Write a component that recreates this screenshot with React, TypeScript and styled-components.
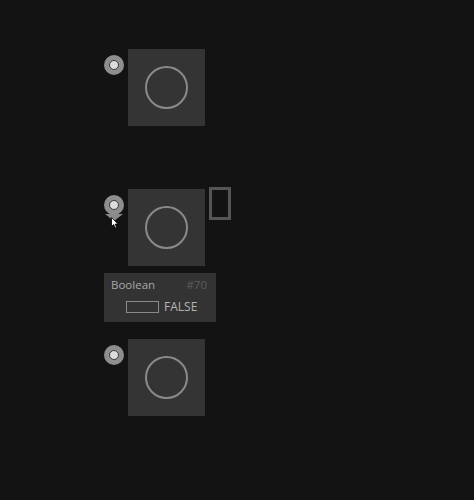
import styled, { createGlobalStyle } from 'styled-components';

const GlobalStyle = createGlobalStyle`
  html, body {
    margin: 0;
    padding: 0;
    background: #131313;
  }
  body {
    font-family: "Open Sans", "Liberation Sans", sans-serif;
  }
`;

// Fondo del lienzo con los nodos
const Canvas = styled.div`
  min-height: 500px;
  box-sizing: border-box;
  padding: 49px 0 0 104px;
  display: flex;
  flex-direction: column;
  align-items: flex-start;
`;

const NodeRow = styled.div<{ $mt?: number }>`
  display: flex;
  align-items: flex-start;
  gap: 4px;
  margin-top: ${(p) => p.$mt ?? 0}px;
`;

const Pin = styled.div`
  position: relative;
  margin-top: 6px;
  width: 20px;
  display: flex;
  flex-direction: column;
  align-items: center;
`;

const PinHead = styled.div`
  width: 20px;
  height: 20px;
  border-radius: 50%;
  background: #8e8e8e;
  display: flex;
  align-items: center;
  justify-content: center;
`;

const PinDot = styled.div`
  width: 8px;
  height: 8px;
  border-radius: 50%;
  background: #dcdcdc;
  border: 1px solid #3a3a3a;
`;

const PinArrow = styled.div`
  width: 0;
  height: 0;
  margin-top: -1px;
  border-left: 9px solid transparent;
  border-right: 9px solid transparent;
  border-top: 7px solid #8a8a8a;
`;

const Cursor = styled.svg`
  position: absolute;
  left: 7px;
  top: 22px;
`;

const NodeBox = styled.div`
  width: 77px;
  height: 77px;
  background: #343434;
  display: flex;
  align-items: center;
  justify-content: center;
`;

const Ring = styled.div`
  width: 39px;
  height: 39px;
  border-radius: 50%;
  border: 2px solid #8a8a8a;
`;

const Outline = styled.div`
  margin-top: -2px;
  width: 16px;
  height: 27px;
  border: 3px solid #565656;
`;

const Tooltip = styled.div`
  margin-top: 7px;
  width: 112px;
  height: 49px;
  box-sizing: border-box;
  padding: 4px 9px 0 7px;
  background: #333333;
  display: flex;
  flex-direction: column;
`;

const TipHeader = styled.div`
  display: flex;
  justify-content: space-between;
  font-size: 11.5px;
  line-height: 16px;
`;

const TipTitle = styled.span`
  color: #a8a8a8;
`;

const TipId = styled.span`
  color: #5e5e5e;
`;

const TipValue = styled.div`
  margin-top: 8px;
  padding-left: 15px;
  display: flex;
  align-items: center;
  gap: 5px;
`;

const Check = styled.div`
  width: 31px;
  height: 10px;
  border: 1px solid #8a8a8a;
`;

const ValueLabel = styled.span`
  color: #b4b4b4;
  font-size: 12px;
  line-height: 12px;
`;

const Node = ({ active }: { active?: boolean }) => (
  <>
    <Pin>
      <PinHead>
        <PinDot />
      </PinHead>
      {active && <PinArrow />}
      {active && (
        <Cursor width="8" height="12" viewBox="0 0 8 12">
          <path d="M0.5 0.5 L0.5 9.5 L2.6 7.6 L4.2 11 L5.6 10.3 L4.1 7.1 L7 7.1 Z" fill="#ffffff" stroke="#000000" strokeWidth="0.8" />
        </Cursor>
      )}
    </Pin>
    <NodeBox>
      <Ring />
    </NodeBox>
  </>
);

const App = () => {
  return (
    <>
      <GlobalStyle />
      <Canvas>
        <NodeRow>
          <Node />
        </NodeRow>
        <NodeRow $mt={63}>
          <Node active />
          <Outline />
        </NodeRow>
        <Tooltip>
          <TipHeader>
            <TipTitle>Boolean</TipTitle>
            <TipId>#70</TipId>
          </TipHeader>
          <TipValue>
            <Check />
            <ValueLabel>FALSE</ValueLabel>
          </TipValue>
        </Tooltip>
        <NodeRow $mt={17}>
          <Node />
        </NodeRow>
      </Canvas>
    </>
  );
};

export default App;
